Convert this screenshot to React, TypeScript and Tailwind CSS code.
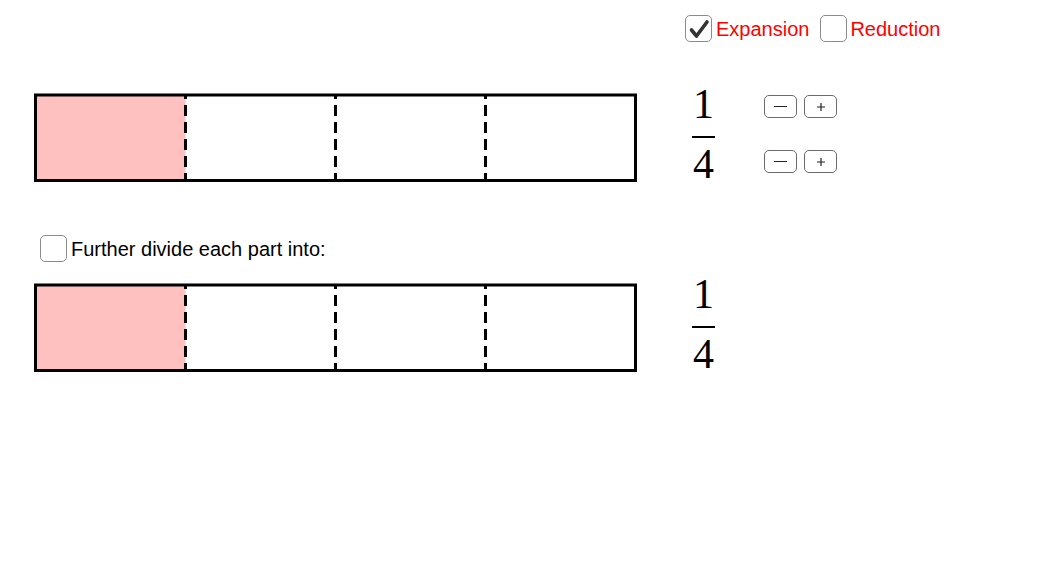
import React from "react";

type CheckProps = { checked?: boolean };

function Checkbox({ checked = false }: CheckProps) {
  return (
    <div className="w-[27px] h-[27px] shrink-0 rounded-[5px] border-[1.5px] border-[#8c8c8c] bg-white flex items-center justify-center">
      {checked && (
        <svg width="24" height="24" viewBox="0 0 24 24">
          <path
            d="M4.5 13 L9.5 19 L20 5"
            fill="none"
            stroke="#333"
            strokeWidth="3.6"
            strokeLinecap="round"
            strokeLinejoin="round"
          />
        </svg>
      )}
    </div>
  );
}

function FractionBar({ parts, filled }: { parts: number; filled: number }) {
  const w = 600;
  const step = w / parts;
  const dividers = Array.from({ length: parts - 1 }, (_, i) => 2.5 + step * (i + 1));
  return (
    <svg width="606" height="90" viewBox="0 0 606 90" className="shrink-0 block">
      <rect x={2.5} y={2} width={step * filled} height={85.5} fill="#ffc0c0" />
      {dividers.map((x) => (
        <line
          key={x}
          x1={x}
          y1={2}
          x2={x}
          y2={87.5}
          stroke="#000"
          strokeWidth="3"
          strokeDasharray="11 6"
          strokeDashoffset="-10"
        />
      ))}
      <rect x={2.5} y={2} width={w} height={85.5} fill="none" stroke="#000" strokeWidth="3" />
    </svg>
  );
}

function Fraction({ num, den }: { num: number; den: number }) {
  return (
    <div className="flex flex-col items-center w-[23px] font-['Liberation_Serif',serif] text-[42px] leading-none text-black">
      <span>{num}</span>
      <div className="mt-[11px] h-[1.5px] w-[23px] bg-black" />
      <span className="mt-[5.5px]">{den}</span>
    </div>
  );
}

function StepButton({ sign }: { sign: "minus" | "plus" }) {
  return (
    <button className="w-[33px] h-[23px] rounded-[5px] border border-[#6b6b6b] bg-white flex items-center justify-center">
      {sign === "minus" ? (
        <div className="w-[13px] h-[1.5px] bg-[#222]" />
      ) : (
        <svg width="10" height="10" viewBox="0 0 10 10">
          <path d="M5 1 V9 M1 5 H9" stroke="#222" strokeWidth="1.2" />
        </svg>
      )}
    </button>
  );
}

export default function App() {
  return (
    <div className="w-[1050px] h-[580px] bg-white overflow-hidden font-['Liberation_Sans',Arial,sans-serif]">
      <div className="flex items-center pt-[15px] pl-[685px] h-[42px]">
        <Checkbox checked />
        <span className="ml-[4px] text-[20px] text-[#ff0000] leading-none">Expansion</span>
        <div className="ml-[11px]">
          <Checkbox />
        </div>
        <span className="ml-[3px] text-[20px] text-[#ff0000] leading-none">Reduction</span>
      </div>

      <div className="mt-[41px] pl-[33px] h-[110px] flex items-start">
        <div className="mt-[10px]">
          <FractionBar parts={4} filled={1} />
        </div>
        <div className="ml-[53px]">
          <Fraction num={1} den={4} />
        </div>
        <div className="ml-[49px] mt-[12px] flex flex-col gap-[32px]">
          <div className="flex gap-[7px]">
            <StepButton sign="minus" />
            <StepButton sign="plus" />
          </div>
          <div className="flex gap-[7px]">
            <StepButton sign="minus" />
            <StepButton sign="plus" />
          </div>
        </div>
      </div>

      <div className="mt-[42px] pl-[40px] flex items-center h-[27px]">
        <Checkbox />
        <span className="ml-[4px] text-[20px] text-black leading-none">Further divide each part into:</span>
      </div>

      <div className="mt-[11px] pl-[33px] flex items-start">
        <div className="mt-[10px]">
          <FractionBar parts={4} filled={1} />
        </div>
        <div className="ml-[53px]">
          <Fraction num={1} den={4} />
        </div>
      </div>
    </div>
  );
}
